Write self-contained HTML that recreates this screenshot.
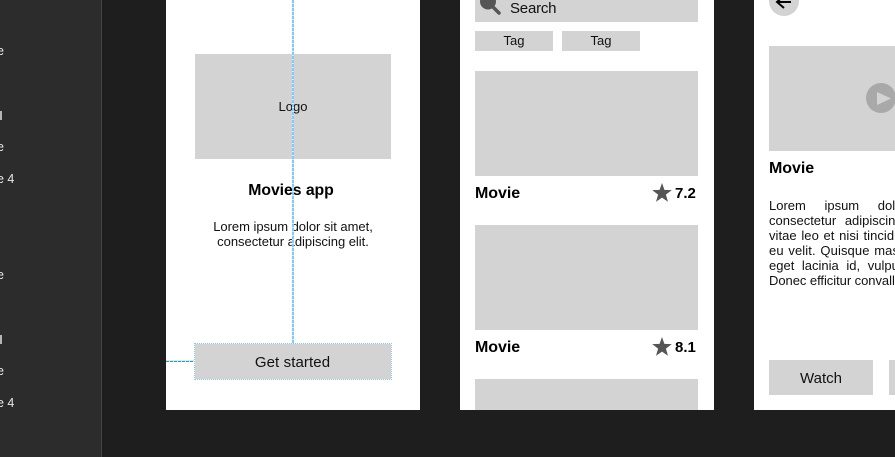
<!DOCTYPE html>
<html>
<head>
<meta charset="utf-8">
<style>
html,body{margin:0;padding:0;width:895px;height:457px;overflow:hidden;background:#1e1e1e}
body{position:relative;font-family:"Liberation Sans",sans-serif;color:#000}
div,svg{position:absolute}
.t{white-space:nowrap;line-height:16px}
.g{background:#d3d3d3}
.c{text-align:center}
.s{color:#e8e8e8;font-size:12.5px;line-height:14px;white-space:nowrap}
.b{font-weight:700;font-size:16px;line-height:18px;white-space:nowrap;color:#000;letter-spacing:-.05px}
.n{font-weight:700;font-size:15px;line-height:18px;white-space:nowrap;color:#000}
.p{font-size:13px;line-height:15px;white-space:nowrap;color:#111}
</style>
</head>
<body>
<!-- Sidebar -->
<div style="left:0;top:0;width:101px;height:457px;background:#2c2c2c"></div>
<div style="left:101px;top:0;width:1px;height:457px;background:#444"></div>
<div class="s" style="left:-3px;top:44px">e</div>
<div style="left:0;top:111px;width:2px;height:9px;background:#b5b5b5"></div>
<div class="s" style="left:-3px;top:140px">e</div>
<div class="s" style="left:-3px;top:172px">e 4</div>
<div class="s" style="left:-3px;top:268px">e</div>
<div style="left:0;top:335px;width:2px;height:9px;background:#b5b5b5"></div>
<div class="s" style="left:-3px;top:364px">e</div>
<div class="s" style="left:-3px;top:396px">e 4</div>

<!-- Card 1 -->
<div style="left:166px;top:0;width:254px;height:410px;background:#fff"></div>
<div class="g" style="left:195px;top:54px;width:196px;height:105px"></div>
<div class="t c" style="left:195px;top:99px;width:196px;font-size:13px;color:#111">Logo</div>
<div class="c" style="left:164px;top:182px;width:254px;font-weight:700;font-size:15.8px;line-height:18px;letter-spacing:-.05px">Movies app</div>
<div class="p c" style="left:166px;top:219px;width:254px;letter-spacing:-.03px">Lorem ipsum dolor sit amet,</div>
<div class="p c" style="left:166px;top:234px;width:254px;letter-spacing:-.03px">consectetur adipiscing elit.</div>
<div class="g" style="left:195px;top:344px;width:196px;height:35px"></div>
<div class="c" style="left:195px;top:354px;width:195px;font-size:15px;line-height:18px;color:#111;letter-spacing:.1px">Get started</div>
<!-- Prototype lines -->
<div style="left:292px;top:0;width:2px;height:344px;background:repeating-linear-gradient(#84c9f8 0 3px,#d6ecfc 3px 4px)"></div>
<div style="left:194px;top:343px;width:196px;height:35px;border:1px dotted #8cc6ea"></div>
<div style="left:166px;top:360px;width:28px;height:1px;background:#cdeef5"></div>
<div style="left:166px;top:361px;width:28px;height:1px;background:repeating-linear-gradient(90deg,#3f93ad 0 3px,#cfe6ee 3px 4px)"></div>

<!-- Card 2 -->
<div style="left:460px;top:0;width:254px;height:410px;background:#fff;overflow:hidden">
  <div class="g" style="left:15px;top:-10px;width:223px;height:32px"></div>
  <svg style="left:18px;top:-4px" width="24" height="24" viewBox="0 0 24 24"><circle cx="10" cy="5.5" r="8" fill="#555"/><path d="M14 10l7 7" stroke="#555" stroke-width="3.5" stroke-linecap="round"/></svg>
  <div class="t" style="left:50px;top:0;font-size:15px;color:#111;line-height:17px;letter-spacing:-.2px">Search</div>
  <div class="g" style="left:15px;top:31px;width:78px;height:20px"></div>
  <div class="t c" style="left:15px;top:33px;width:78px;font-size:13px;color:#111">Tag</div>
  <div class="g" style="left:102px;top:31px;width:78px;height:20px"></div>
  <div class="t c" style="left:102px;top:33px;width:78px;font-size:13px;color:#111">Tag</div>

  <div class="g" style="left:15px;top:71px;width:223px;height:105px"></div>
  <div class="b" style="left:15px;top:185px">Movie</div>
  <svg style="left:192px;top:183px" width="20" height="19" viewBox="0 0 20 19"><path d="M10 0l2.4 6.9 7.4.2-5.9 4.5 2.1 7.2L10 14.6 4 18.8l2.1-7.2L.2 7.1l7.4-.2z" fill="#555"/></svg>
  <div class="n" style="left:215px;top:185px">7.2</div>

  <div class="g" style="left:15px;top:225px;width:223px;height:105px"></div>
  <div class="b" style="left:15px;top:339px">Movie</div>
  <svg style="left:192px;top:337px" width="20" height="19" viewBox="0 0 20 19"><path d="M10 0l2.4 6.9 7.4.2-5.9 4.5 2.1 7.2L10 14.6 4 18.8l2.1-7.2L.2 7.1l7.4-.2z" fill="#555"/></svg>
  <div class="n" style="left:215px;top:339px">8.1</div>

  <div class="g" style="left:15px;top:379px;width:223px;height:40px"></div>
</div>

<!-- Card 3 -->
<div style="left:754px;top:0;width:141px;height:410px;background:#fff;overflow:hidden">
  <div style="left:15px;top:-14px;width:30px;height:30px;border-radius:50%;background:#d3d3d3"></div>
  <svg style="left:19px;top:-5px" width="22" height="18" viewBox="0 0 22 18"><path d="M10.5 1L4 7l7 6M4 7h14" fill="none" stroke="#000" stroke-width="2"/></svg>
  <div class="g" style="left:15px;top:46px;width:126px;height:105px"></div>
  <div style="left:112px;top:83px;width:30px;height:30px;border-radius:50%;background:#a9a9a9"></div>
  <svg style="left:122px;top:89px" width="20" height="20" viewBox="0 0 20 20"><path d="M1 3l14 6.5L1 16z" fill="#d3d3d3"/></svg>
  <div class="b" style="left:15px;top:160px">Movie</div>
  <div class="p" style="left:15px;top:198px;word-spacing:15px">Lorem ipsum dolor</div>
  <div class="p" style="left:15px;top:213px;word-spacing:5px">consectetur adipiscing</div>
  <div class="p" style="left:15px;top:228px;letter-spacing:.05px;word-spacing:1px">vitae leo et nisi tincidunt</div>
  <div class="p" style="left:15px;top:243px;letter-spacing:.1px;word-spacing:1px">eu velit. Quisque massa</div>
  <div class="p" style="left:15px;top:258px;word-spacing:4px">eget lacinia id, vulputate</div>
  <div class="p" style="left:15px;top:273px;letter-spacing:-.05px">Donec efficitur convallis</div>
  <div class="g" style="left:15px;top:360px;width:104px;height:35px"></div>
  <div class="c" style="left:15px;top:370px;width:104px;font-size:15px;line-height:18px;color:#111">Watch</div>
  <div class="g" style="left:135px;top:360px;width:10px;height:35px"></div>
</div>
</body>
</html>
